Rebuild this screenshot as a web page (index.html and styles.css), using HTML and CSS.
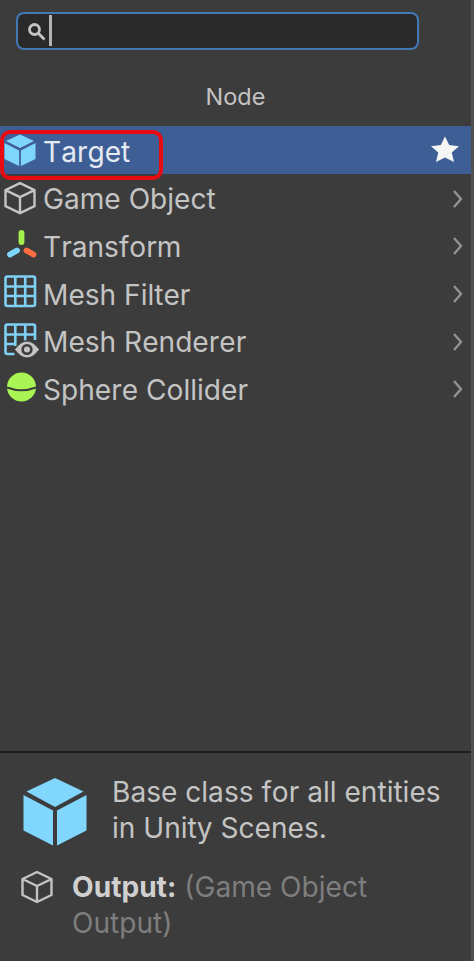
FILE: index.html
```html
<!DOCTYPE html>
<html>
<head>
    <meta charset="utf-8">
    <title>Node</title>
    <link rel="stylesheet" href="styles.css">
</head>
<body>
    <div class="panel">
        <div class="search">
            <svg class="search-icon" width="20" height="20" viewBox="0 0 20 20">
                <circle cx="7.5" cy="7.5" r="5" />
                <path d="M11 11 L17.5 17.5" />
            </svg>
            <span class="caret"></span>
        </div>

        <h1 class="title">Node</h1>

        <ul class="list">
            <li class="item selected">
                <svg class="icon" width="34" height="34" viewBox="0 0 34 34">
                    <g fill="#7fd6fd">
                        <path d="M17 0.5 L31 7 L17 14 L3 7 Z" />
                        <path d="M1.5 9 L16.1 16.5 V32 L1.5 25 Z" />
                        <path d="M32.5 9 L17.9 16.5 V32 L32.5 25 Z" />
                    </g>
                </svg>
                <span class="label">Target</span>
                <svg class="star" width="30" height="28" viewBox="0 0 30 28">
                    <path d="M15 0.5 L19.2 9 L29 10.2 L21.8 16.6 L24 26 L15 21.5 L6 26 L8.2 16.6 L1 10.2 L10.8 9 Z" />
                </svg>
                <span class="highlight"></span>
            </li>
            <li class="item">
                <svg class="icon outline" width="34" height="34" viewBox="0 0 34 34">
                    <path d="M17 1.2 L31.5 8.2 V24.2 L17 31.2 L2.5 24.2 V8.2 Z M2.5 8.2 L17 15.2 L31.5 8.2 M17 15.2 V31.2" />
                </svg>
                <span class="label">Game Object</span>
                <svg class="arrow" width="12" height="20" viewBox="0 0 12 20"><path d="M2 2 L9 10 L2 18" /></svg>
            </li>
            <li class="item">
                <svg class="icon axes" width="34" height="34" viewBox="0 0 34 34">
                    <path stroke="#a6f04d" d="M18.5 4 V13" />
                    <path stroke="#7fd6fd" d="M14 21.5 L7 25.5" />
                    <path stroke="#ff6e40" d="M23.5 21.5 L30.5 25.5" />
                </svg>
                <span class="label">Transform</span>
                <svg class="arrow" width="12" height="20" viewBox="0 0 12 20"><path d="M2 2 L9 10 L2 18" /></svg>
            </li>
            <li class="item">
                <svg class="icon grid" width="34" height="34" viewBox="0 0 34 34">
                    <rect x="2.5" y="0.5" width="29.5" height="29.5" rx="2" />
                    <path d="M12.3 0.5 V30 M22.2 0.5 V30 M2.5 10.5 H32 M2.5 20 H32" />
                </svg>
                <span class="label">Mesh Filter</span>
                <svg class="arrow" width="12" height="20" viewBox="0 0 12 20"><path d="M2 2 L9 10 L2 18" /></svg>
            </li>
            <li class="item">
                <svg class="icon grid" width="38" height="34" viewBox="0 0 38 34">
                    <path d="M11.5 30 H4.5 Q2.5 30 2.5 28 V2.5 Q2.5 0.5 4.5 0.5 H30 Q32 0.5 32 2.5 V16 M12.3 0.5 V22 M22.2 0.5 V16.5 M2.5 10.5 H32 M2.5 20 H13.5" />
                    <path class="eye" d="M11.5 25.5 Q24 8.5 36.5 25.5 Q24 42.5 11.5 25.5 Z" />
                    <circle class="iris" cx="24" cy="25.5" r="5.6" />
                    <circle class="pupil" cx="24" cy="25.5" r="3" />
                </svg>
                <span class="label">Mesh Renderer</span>
                <svg class="arrow" width="12" height="20" viewBox="0 0 12 20"><path d="M2 2 L9 10 L2 18" /></svg>
            </li>
            <li class="item">
                <svg class="icon" width="34" height="34" viewBox="0 0 34 34">
                    <circle cx="18.5" cy="15" r="14.5" fill="#a8f553" />
                    <path d="M4 15.5 Q18.5 21 33 15.5" fill="none" stroke="#3c3c3c" stroke-width="2" />
                </svg>
                <span class="label">Sphere Collider</span>
                <svg class="arrow" width="12" height="20" viewBox="0 0 12 20"><path d="M2 2 L9 10 L2 18" /></svg>
            </li>
        </ul>

        <div class="details">
            <div class="summary">
                <svg class="big-cube" width="64" height="68" viewBox="0 0 64 68">
                    <path d="M32 0 L60.5 13.5 L32 29 L3.5 13.5 Z" />
                    <path d="M0.5 17 L30 32.5 V67.5 L0.5 52.5 Z" />
                    <path d="M63.5 17 L34 32.5 V67.5 L63.5 52.5 Z" />
                </svg>
                <p>Base class for all entities in Unity Scenes.</p>
            </div>
            <div class="output">
                <svg class="outline" width="34" height="34" viewBox="0 0 34 34">
                    <path d="M17 2 L31.5 9 V25 L17 32 L2.5 25 V9 Z M2.5 9 L17 16 L31.5 9 M17 16 V32" />
                </svg>
                <p><b>Output:</b> (Game Object<br>Output)</p>
            </div>
        </div>
    </div>
</body>
</html>
```

FILE: styles.css
```css
body {
    margin: 0;
    background-color: #3c3c3c;
    color: #c4c4c4;
    font-family: Inter, sans-serif;
    font-size: 28.1px;
    font-kerning: none;
}

.panel {
    display: flex;
    flex-direction: column;
    box-sizing: border-box;
    height: 961px;
    padding-top: 12px;
    border-right: 3px solid #505050;
}

.search {
    display: flex;
    align-items: center;
    box-sizing: border-box;
    width: 403px;
    height: 38px;
    margin-left: 16px;
    padding-left: 9px;
    background-color: #2a2a2a;
    border: 2px solid #4079b5;
    border-radius: 8px;
}

.search-icon {
    margin-top: 2px;
    fill: none;
    stroke: #c4c4c4;
    stroke-width: 2.8;
}

.caret {
    width: 3px;
    height: 31px;
    margin: 0 0 2px 2px;
    background-color: #b4b4b4;
}

.title {
    margin: 32px 0 15px;
    font-size: 23.5px;
    font-weight: normal;
    line-height: 29px;
    text-align: center;
}

.list {
    flex: 1;
    margin: 0;
    padding: 0;
    list-style: none;
}

.item {
    display: flex;
    align-items: center;
    position: relative;
    box-sizing: border-box;
    height: 47.6px;
    padding: 3px 7px 0 3px;
}

.icon {
    flex-shrink: 0;
    overflow: visible;
}

.label {
    flex: 1;
    margin-left: 6px;
    padding-top: 1px;
    line-height: 36px;
    white-space: nowrap;
}

.icon[width="38"] + .label {
    margin-left: 2px;
}

.selected {
    background-color: #3e5f96;
    color: #e6eaf2;
}

.star {
    margin: 0 4px 3px 0;
    fill: #f5f5f5;
}

/* red frame around the selected entry */
.highlight {
    position: absolute;
    top: 4px;
    left: 0;
    box-sizing: border-box;
    width: 163px;
    height: 50px;
    border: 4px solid #e80c12;
    border-radius: 10px;
    z-index: 1;
}

.outline {
    flex-shrink: 0;
    fill: none;
    stroke: #c4c4c4;
    stroke-width: 2.4;
    stroke-linejoin: round;
}

.axes {
    stroke-width: 5.8;
    stroke-linecap: round;
}

.grid {
    margin-bottom: 2px;
    fill: none;
    stroke: #7fd0f5;
    stroke-width: 2.6;
}

.eye {
    fill: #c4c4c4;
    stroke: #3c3c3c;
    stroke-width: 1;
}

.iris {
    fill: #3c3c3c;
    stroke: none;
}

.pupil {
    fill: #c4c4c4;
    stroke: none;
}

.arrow {
    fill: none;
    stroke: #929292;
    stroke-width: 2.4;
}

.details {
    box-sizing: border-box;
    height: 210px;
    padding: 21px 20px 0;
    border-top: 2px solid #1f1f1f;
}

.details p {
    margin: 0;
    line-height: 36px;
}

.summary {
    display: flex;
    padding-left: 3px;
    gap: 25px;
}

.big-cube {
    flex-shrink: 0;
    margin-top: 4px;
    fill: #80d6fd;
}

.output {
    display: flex;
    margin-top: 23px;
    gap: 18px;
    color: #7e7e7e;
}

.output .outline {
    margin-top: 1px;
}

.output b {
    color: #d0d0d0;
}
```
